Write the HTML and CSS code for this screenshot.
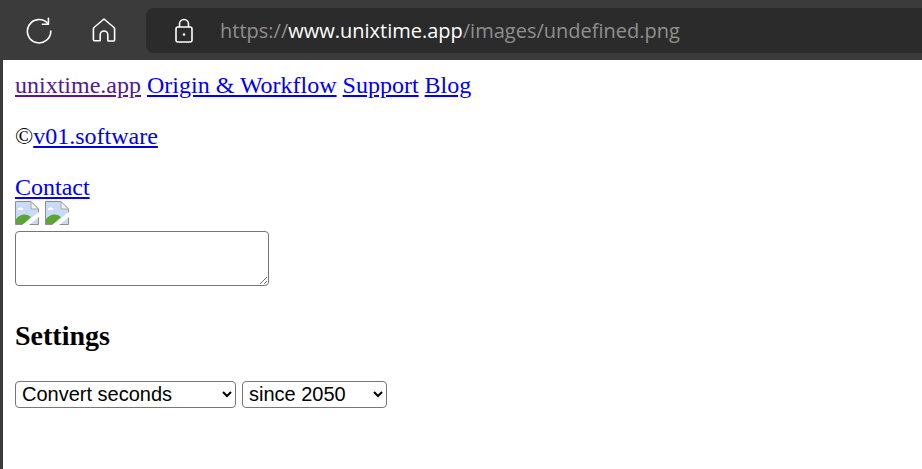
FILE: index.html
```html
<!DOCTYPE html>
<html lang="en">
<head>
    <meta charset="UTF-8">
    <meta name="viewport" content="width=device-width, initial-scale=1.0">
    <title>unixtime.app</title>
    <link rel="stylesheet" href="styles.css">
</head>
<body>

    <header class="browser-bar">
        <svg class="bar-icon reload-icon" width="28" height="28" viewBox="0 0 28 28" fill="none" stroke="#fff" stroke-width="1.6" stroke-linecap="round" stroke-linejoin="round">
            <path d="M22.6 7.2A11.7 11.7 0 1 0 25.8 15"/>
            <path d="M23.4 2.2v6h-6"/>
        </svg>
        <svg class="bar-icon home-icon" width="24" height="26" viewBox="0 0 24 26" fill="none" stroke="#fff" stroke-width="1.6" stroke-linejoin="round">
            <path d="M12 2 2 10.5a2 2 0 0 0-.6 1.4v10.6a1.3 1.3 0 0 0 1.3 1.3h4.7a.8.8 0 0 0 .8-.8v-5.2a3.8 3.8 0 0 1 7.6 0V23a.8.8 0 0 0 .8 1h4.700a1.300 1.300 0 0 0 1.300-1.300V11.900a2 2 0 0 0-.6-1.400z"/>
        </svg>
        <div class="address-bar">
            <svg class="lock-icon" width="20" height="26" viewBox="0 0 20 26" fill="none" stroke="#fff" stroke-width="1.6">
                <rect x="2" y="9" width="16" height="15" rx="2"/>
                <path d="M5.500 9V6a4.500 4.500 0 0 1 9 0v3"/>
                <circle cx="10" cy="16.500" r="1.300" fill="#fff" stroke="none"/>
            </svg>
            <span class="url">https://<b class="url-host">www.unixtime.app</b>/images/undefined.png</span>
        </div>
    </header>

    <main class="page">
        <a class="visited" href="#">unixtime.app</a>
        <a href="#">Origin &amp; Workflow</a>
        <a href="#">Support</a>
        <a href="#">Blog</a>

        <p>©<a href="#">v01.software</a></p>
        <p><a href="#">Contact</a></p>

        <div>
            <svg class="broken-img" width="24" height="24" viewBox="0 0 24 24">
                <path d="M.5.500H16L23.500 8v15.500H.500z" fill="#c9dcf7" stroke="#8e8e8e"/>
                <path d="M16 .5V8h7.500z" fill="#f2f2f2" stroke="#a8a8a8"/>
                <path d="M3 7.500c1-1.500 4-1.500 5 0 1 1 0 1.500-1 1.500H4c-1 0-1.500-.5-1-1.500z" fill="#fff"/>
                <path d="M1 23v-5c4-5 10-6 15-2l-7 7z" fill="#5aa632"/>
                <path d="M7 24 24 11v5L14 24z" fill="#fff"/>
            </svg>
            <svg class="broken-img" width="24" height="24" viewBox="0 0 24 24">
                <path d="M.5.500H16L23.500 8v15.500H.500z" fill="#c9dcf7" stroke="#8e8e8e"/>
                <path d="M16 .5V8h7.500z" fill="#f2f2f2" stroke="#a8a8a8"/>
                <path d="M3 7.500c1-1.500 4-1.500 5 0 1 1 0 1.500-1 1.500H4c-1 0-1.500-.5-1-1.500z" fill="#fff"/>
                <path d="M1 23v-5c4-5 10-6 15-2l-7 7z" fill="#5aa632"/>
                <path d="M7 24 24 11v5L14 24z" fill="#fff"/>
            </svg>
        </div>

        <textarea class="notes"></textarea>

        <h3>Settings</h3>

        <select class="unit-select">
            <option>Convert seconds</option>
        </select>
        <select class="since-select">
            <option>since 2050</option>
        </select>
    </main>

</body>
</html>
```

FILE: styles.css
```css
body {
    margin: 0;
    background-color: #3b3b3b;
    overflow: hidden;
}

.browser-bar {
    display: flex;
    align-items: center;
    height: 60px;
    background-color: #3b3b3b;
}

.reload-icon {
    margin-left: 25px;
}

.home-icon {
    margin-left: 39px;
}

.address-bar {
    display: flex;
    align-items: center;
    flex: 1;
    height: 45px;
    margin-left: 30px;
    margin-top: 1px;
    padding-left: 28px;
    background-color: #2b2b2b;
    border-radius: 8px 0 0 8px;
}

.url {
    margin-left: 26px;
    font-family: "Open Sans", sans-serif;
    font-size: 20px;
    color: #8f8f8f;
}

.url-host {
    font-weight: normal;
    color: #fff;
}

.page {
    height: 409px;
    margin-left: 3px;
    padding: 12px;
    background-color: #fff;
    font-family: "Liberation Serif", serif;
    font-size: 24px;
    color: #000;
}

.page a {
    color: #0000ee;
}

.page a.visited {
    color: #551a8b;
}

.page p {
    margin: 24px 0;
}

.page p + div {
    margin-top: -24px;
}

.notes {
    width: 254px;
    height: 55px;
    padding: 3px;
    box-sizing: border-box;
    border: 1px solid #767676;
    border-radius: 4px;
}

.page h3 {
    margin: 28px 0;
    font-size: 28px;
}

.page select {
    height: 27px;
    font-family: "Liberation Sans", Arial, sans-serif;
    font-size: 20px;
    padding: 0 2px;
    border: 1px solid #767676;
    border-radius: 4px;
    background-color: #fff;
}

.unit-select {
    width: 221px;
}

.since-select {
    width: 145px;
}
```
